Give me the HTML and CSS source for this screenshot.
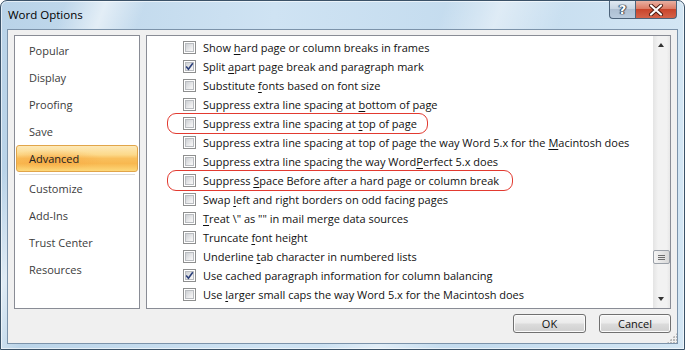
FILE: index.html
```html
<!DOCTYPE html>
<html>
<head>
<meta charset="utf-8">
<link rel="stylesheet" href="styles.css">
</head>
<body>
<div class="window">
  <div class="titlebar">
    <span class="title">Word Options</span>
    <div class="caption-btns">
      <div class="cap help">?</div>
      <div class="cap close">
        <svg width="16" height="12" viewBox="0 0 16 12"><path d="M3 1.5 L13 10.5 M13 1.5 L3 10.5" stroke="#4a1a10" stroke-width="4" stroke-linecap="round"/><path d="M3 1.5 L13 10.5 M13 1.5 L3 10.5" stroke="#fff" stroke-width="2.2" stroke-linecap="round"/></svg>
      </div>
    </div>
  </div>
  <div class="client">
    <div class="main">
      <nav class="nav">
        <div class="item">Popular</div>
        <div class="item">Display</div>
        <div class="item">Proofing</div>
        <div class="item">Save</div>
        <div class="item active">Advanced</div>
        <div class="sep"></div>
        <div class="item">Customize</div>
        <div class="item">Add-Ins</div>
        <div class="item">Trust Center</div>
        <div class="item">Resources</div>
      </nav>
      <div class="content">
        <div class="list">
          <div class="row"><span class="cb"></span><span class="lbl">Show <u>h</u>ard page or column breaks in frames</span></div>
          <div class="row"><span class="cb checked"><svg width="9" height="9" viewBox="0 0 9 9"><path d="M1.2 4.6 L3.4 7.2 L7.8 1.2" fill="none" stroke="#2b3f7a" stroke-width="1.6"/></svg></span><span class="lbl">Split <u>a</u>part page break and paragraph mark</span></div>
          <div class="row"><span class="cb"></span><span class="lbl">Substitute <u>f</u>onts based on font size</span></div>
          <div class="row"><span class="cb"></span><span class="lbl">Suppress extra line spacing at <u>b</u>ottom of page</span></div>
          <div class="row"><span class="mark mark-1"></span><span class="cb"></span><span class="lbl">Suppress extra line spacing at <u>t</u>op of page</span></div>
          <div class="row"><span class="cb"></span><span class="lbl">Suppress extra line spacing at top of page the way Word 5.x for the <u>M</u>acintosh does</span></div>
          <div class="row"><span class="cb"></span><span class="lbl">Suppress extra line spacing the way Word<u>P</u>erfect 5.x does</span></div>
          <div class="row"><span class="mark mark-2"></span><span class="cb"></span><span class="lbl">Suppress <u>S</u>pace Before after a hard page or column break</span></div>
          <div class="row"><span class="cb"></span><span class="lbl">Swap <u>l</u>eft and right borders on odd facing pages</span></div>
          <div class="row"><span class="cb"></span><span class="lbl"><u>T</u>reat \" as "" in mail merge data sources</span></div>
          <div class="row"><span class="cb"></span><span class="lbl">Truncate <u>f</u>ont height</span></div>
          <div class="row"><span class="cb"></span><span class="lbl">Underline <u>t</u>ab character in numbered lists</span></div>
          <div class="row"><span class="cb checked"><svg width="9" height="9" viewBox="0 0 9 9"><path d="M1.2 4.6 L3.4 7.2 L7.8 1.2" fill="none" stroke="#2b3f7a" stroke-width="1.6"/></svg></span><span class="lbl">Use cached paragraph information for column balancing</span></div>
          <div class="row"><span class="cb"></span><span class="lbl">Use <u>l</u>arger small caps the way Word 5.x for the Macintosh does</span></div>
        </div>
        <div class="scrollbar">
          <div class="arrow up"></div>
          <div class="track">
            <div class="thumb"><span></span><span></span><span></span></div>
          </div>
          <div class="arrow down"></div>
        </div>
      </div>
    </div>
    <div class="footer">
      <button class="btn">OK</button>
      <button class="btn">Cancel</button>
    </div>
    <div class="grip"></div>
  </div>
</div>
</body>
</html>
```
FILE: styles.css
```css
html, body {
  margin: 0;
  padding: 0;
  background: #ffffff;
}
body {
  width: 685px;
  height: 350px;
  overflow: hidden;
  font-family: "Open Sans", "Noto Sans", sans-serif;
  font-size: 11px;
}
.window {
  width: 685px;
  height: 350px;
  box-sizing: border-box;
  border: 1px solid #3b5268;
  border-radius: 7px 7px 0 0;
  padding: 0 6px 5px 6px;
  display: flex;
  flex-direction: column;
  background:
    linear-gradient(110deg, rgba(255,255,255,0) 8%, rgba(255,255,255,0.55) 13%, rgba(255,255,255,0) 18%, rgba(255,255,255,0) 55%, rgba(255,255,255,0.45) 62%, rgba(255,255,255,0) 70%),
    linear-gradient(to right, #b9d3e8, #cfe3f3 40%, #c3dbee 70%, #d3e6f4);
  box-shadow: inset 0 0 0 1px rgba(255,255,255,0.6);
}
.titlebar {
  height: 28px;
  flex: none;
  display: flex;
  align-items: flex-start;
  justify-content: space-between;
}
.title {
  color: #000;
  padding-left: 1px;
  margin-top: 6px;
  font-size: 11.5px;
}
.caption-btns {
  display: flex;
  margin-right: 1px;
}
.cap {
  height: 18px;
  box-sizing: border-box;
  border: 1px solid #4d637a;
  border-top: none;
  display: flex;
  align-items: center;
  justify-content: center;
}
.help {
  width: 26px;
  border-right: none;
  border-radius: 0 0 0 4px;
  background: linear-gradient(#e0e9f2, #c7d5e3 45%, #aebfd2 50%, #b9cbdd);
  color: #fff;
  font-family: "DejaVu Sans", sans-serif;
  font-weight: bold;
  font-size: 13px;
  text-shadow: 0 0 1px #2b3a4c, 0 0 1px #2b3a4c, 1px 0 1px #2b3a4c, -1px 0 1px #2b3a4c;
}
.close {
  width: 42px;
  border-radius: 0 0 4px 0;
  background: linear-gradient(#e9b0a2, #dd7c66 45%, #c9452c 50%, #d4634a);
}
.client {
  flex: 1;
  min-height: 0;
  position: relative;
  box-sizing: border-box;
  border: 1px solid #7c93aa;
  background: #f0f0f0;
  padding: 5px 6px 10px 6px;
  display: flex;
  flex-direction: column;
  gap: 5px;
}
.main {
  height: 274px;
  flex: none;
  display: flex;
  gap: 6px;
}
.nav {
  width: 126px;
  flex: none;
  box-sizing: border-box;
  border: 1px solid #898c95;
  background: #fff;
  padding-top: 1px;
  display: flex;
  flex-direction: column;
}
.item {
  height: 27px;
  line-height: 27px;
  padding-left: 13px;
  color: #3c3c3c;
  margin: 0 1px;
  box-sizing: border-box;
  flex: none;
}
.item.active {
  padding-left: 12px;
  border: 1px solid #e1a54a;
  border-radius: 3px;
  line-height: 25px;
  background:
    radial-gradient(ellipse 60% 60% at 30% 55%, rgba(247,160,60,0.55), rgba(247,160,60,0) 70%),
    linear-gradient(#fde9b8 0%, #fcd98a 35%, #f9bf5c 50%, #f8b850 70%, #fdd87a 100%);
  color: #222;
}
.sep {
  height: 1px;
  flex: none;
  background: #dcdcdc;
  margin: 2px 4px 0 4px;
}
.content {
  flex: 1;
  min-width: 0;
  box-sizing: border-box;
  border: 1px solid #898c95;
  background: #fff;
  display: flex;
}
.list {
  flex: 1;
  min-width: 0;
  overflow: hidden;
  padding-top: 2px;
}
.row {
  position: relative;
  height: 19px;
  display: flex;
  align-items: center;
  padding-left: 36px;
  color: #111;
  white-space: nowrap;
}
.cb {
  width: 13px;
  height: 13px;
  box-sizing: border-box;
  border: 1px solid #8e8f8f;
  background: #fff;
  padding: 1px;
  margin-right: 7px;
  flex: none;
  position: relative;
}
.cb::before {
  content: "";
  display: block;
  width: 9px;
  height: 9px;
  box-sizing: border-box;
  border: 1px solid #b9bcc0;
  background: linear-gradient(135deg, #cdd0d4, #eeeeef 70%, #f8f8f8);
}
.cb svg {
  position: absolute;
  left: 1px;
  top: 1px;
}
.lbl u {
  text-decoration-thickness: 1px;
  text-underline-offset: 2px;
}
.mark {
  position: absolute;
  top: -1px;
  height: 21px;
  left: 20px;
  box-sizing: border-box;
  border: 1.5px solid #e23a30;
  border-radius: 9px;
}
.mark-1 { width: 261px; }
.mark-2 { width: 346px; }
.scrollbar {
  width: 17px;
  flex: none;
  display: flex;
  flex-direction: column;
  background: linear-gradient(to right, #e4e4e4, #f2f2f2 30%, #f2f2f2 80%, #e8e8e8);
}
.arrow {
  height: 17px;
  position: relative;
}
.arrow::before {
  content: "";
  position: absolute;
  left: 5px;
  width: 0;
  height: 0;
  border-left: 3.5px solid transparent;
  border-right: 3.5px solid transparent;
}
.arrow.up::before {
  top: 7px;
  border-bottom: 4px solid #333;
}
.arrow.down::before {
  top: 6px;
  border-top: 4px solid #333;
}
.track {
  flex: 1;
  display: flex;
  flex-direction: column;
  justify-content: flex-end;
  padding-bottom: 27px;
}
.thumb {
  height: 14px;
  box-sizing: border-box;
  border: 1px solid #9aa0a8;
  border-radius: 2px;
  background: linear-gradient(to right, #f4f4f4, #e6e6e6 50%, #d8d8d8);
  display: flex;
  flex-direction: column;
  align-items: center;
  justify-content: center;
  gap: 1px;
}
.thumb span {
  width: 7px;
  height: 1px;
  background: #6d6d6d;
}
.footer {
  display: flex;
  flex: none;
  justify-content: flex-end;
  gap: 13px;
}
.btn {
  height: 19px;
  box-sizing: border-box;
  border: 1px solid #707070;
  border-radius: 3px;
  background: linear-gradient(#f4f4f4, #ebebeb 48%, #dcdcdc 52%, #cfcfcf);
  box-shadow: inset 0 0 0 1px #fbfbfb;
  font-family: "Open Sans", "Noto Sans", sans-serif;
  font-size: 11px;
  color: #111;
  padding: 0;
  line-height: 16px;
}
.btn:first-child { width: 73px; }
.btn:last-child { width: 72px; }
.grip {
  position: absolute;
  right: 0;
  bottom: 0;
  width: 10px;
  height: 10px;
  background:
    radial-gradient(circle at 1px 1px, #b8b8b8 1px, transparent 1.2px) 0 0 / 3px 3px;
  clip-path: polygon(100% 0, 100% 100%, 0 100%);
}
```
